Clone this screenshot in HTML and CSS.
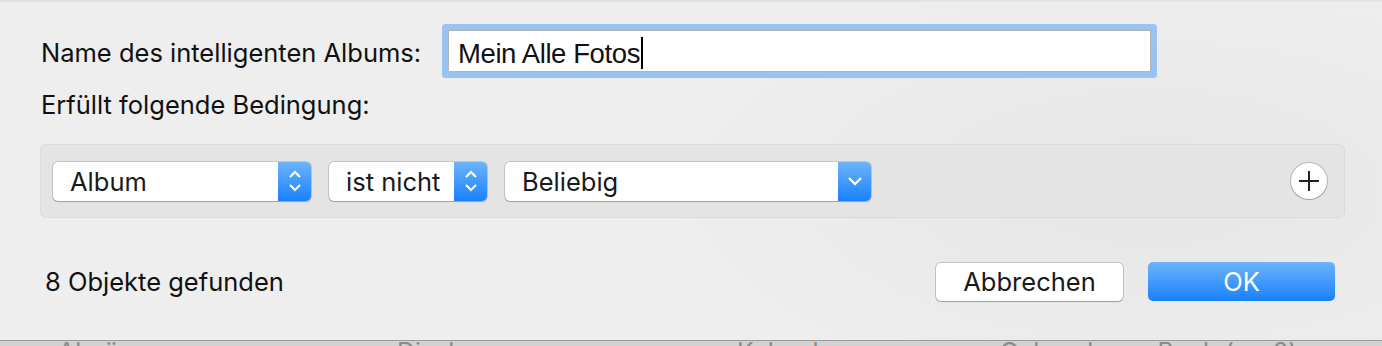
FILE: index.html
```html
<!DOCTYPE html>
<html lang="de">
<head>
    <meta charset="UTF-8">
    <title>Intelligentes Album</title>
    <link rel="stylesheet" href="styles.css">
</head>
<body>
    <div class="sheet">
        <div class="name-row">
            <label class="label" for="album-name">Name des intelligenten Albums:</label>
            <div class="field">
                <span class="field-text">Mein Alle Fotos</span><span class="caret"></span>
            </div>
        </div>

        <div class="label cond-label">Erfüllt folgende Bedingung:</div>

        <div class="criteria">
            <div class="popup popup-album">
                <span class="popup-text">Album</span>
                <span class="popup-arrow">
                    <svg width="14" height="26" viewBox="0 0 14 26"><path d="M2 9 L7 4 L12 9 M2 17 L7 22 L12 17" fill="none" stroke="#fff" stroke-width="2"/></svg>
                </span>
            </div>
            <div class="popup popup-op">
                <span class="popup-text">ist nicht</span>
                <span class="popup-arrow">
                    <svg width="14" height="26" viewBox="0 0 14 26"><path d="M2 9 L7 4 L12 9 M2 17 L7 22 L12 17" fill="none" stroke="#fff" stroke-width="2"/></svg>
                </span>
            </div>
            <div class="popup popup-value">
                <span class="popup-text">Beliebig</span>
                <span class="popup-arrow">
                    <svg width="16" height="12" viewBox="0 0 16 12"><path d="M2 3 L8 9 L14 3" fill="none" stroke="#fff" stroke-width="2.4"/></svg>
                </span>
            </div>
            <div class="add-btn">
                <svg width="22" height="22" viewBox="0 0 22 22"><path d="M11 1 V21 M1 11 H21" stroke="#222" stroke-width="2"/></svg>
            </div>
        </div>

        <div class="footer">
            <div class="count">8 Objekte gefunden</div>
            <button class="btn btn-cancel">Abbrechen</button>
            <button class="btn btn-ok">OK</button>
        </div>
    </div>

    <div class="under">
        <span class="under-item u1">Abzüge</span>
        <span class="under-item u2">Diashow</span>
        <span class="under-item u3">Kalender</span>
        <span class="under-item u4">Gebundenes Buch (groß)</span>
    </div>
</body>
</html>
```

FILE: styles.css
```css
html, body {
    margin: 0;
    padding: 0;
}

body {
    width: 1382px;
    height: 346px;
    overflow: hidden;
    background: #cfcfcf;
    font-family: "Inter", "Liberation Sans", sans-serif;
    color: #111;
}

.sheet {
    height: 341px;
    border-top: 2px solid #e3e3e3;
    background: radial-gradient(ellipse 500px 220px at 1150px 190px, #e6e6e6, rgba(230,230,230,0)), #eeeeee;
    border-bottom: 1px solid #9a9a9a;
    box-shadow: 0 2px 4px rgba(0,0,0,0.25);
    position: relative;
    box-sizing: border-box;
}

.label {
    font-size: 25.5px;
    line-height: 30px;
}

.name-row {
    display: flex;
    align-items: center;
    padding-top: 28px;
    padding-left: 41px;
}

.name-row .label {
    width: 407px;
    margin-top: 3px;
}

.field {
    width: 692px;
    height: 40px;
    background: #fff;
    border: 1px solid #b3b3b3;
    box-shadow: 0 0 0 6px #98c3f2;
    border-radius: 1px;
    display: flex;
    align-items: center;
    padding-left: 9px;
    box-sizing: content-box;
}

.field-text {
    font-family: "Liberation Sans", sans-serif;
    font-size: 27.5px;
    letter-spacing: -0.4px;
    margin-top: 5px;
}

.caret {
    display: inline-block;
    width: 2px;
    height: 32px;
    background: #000;
    margin-left: 1px;
    margin-top: 3px;
}

.cond-label {
    padding-left: 41px;
    margin-top: 18px;
}

.criteria {
    margin: 24px 0 0 40px;
    width: 1305px;
    height: 74px;
    box-sizing: border-box;
    background: #e4e4e4;
    border: 1px solid #dadada;
    border-radius: 6px;
    display: flex;
    align-items: center;
    padding: 0 12px;
}

.popup {
    height: 39px;
    box-sizing: border-box;
    background: #fff;
    border-radius: 5px;
    box-shadow: 0 0 0 1px rgba(0,0,0,0.14), 0 1px 1px rgba(0,0,0,0.18);
    display: flex;
    align-items: center;
    margin-right: 18px;
}

.popup-text {
    flex: 1;
    font-size: 25.5px;
    padding-left: 17px;
    color: #1a1a1a;
}

.popup-arrow {
    width: 33px;
    height: 39px;
    border-radius: 0 5px 5px 0;
    background: linear-gradient(#6db4fb, #1a80fa);
    display: flex;
    align-items: center;
    justify-content: center;
}

.popup-album { width: 258px; }
.popup-op { width: 158px; }
.popup-value { width: 366px; }

.add-btn {
    margin-left: auto;
    margin-right: 5px;
    width: 36px;
    height: 36px;
    border-radius: 50%;
    background: #fff;
    box-shadow: 0 0 0 1px rgba(0,0,0,0.2), 0 1px 1px rgba(0,0,0,0.15);
    display: flex;
    align-items: center;
    justify-content: center;
}

.footer {
    display: flex;
    align-items: center;
    margin-top: 44px;
    padding-left: 45px;
}

.count {
    font-size: 25.5px;
    flex: 1;
}

.btn {
    font-family: "Inter", "Liberation Sans", sans-serif;
    font-size: 25.5px;
    height: 38px;
    width: 187px;
    border-radius: 5px;
    padding: 0;
}

.btn-cancel {
    background: #fff;
    border: none;
    box-shadow: 0 0 0 1px rgba(0,0,0,0.16), 0 1px 1px rgba(0,0,0,0.2);
    color: #1a1a1a;
    margin-right: 25px;
}

.btn-ok {
    background: linear-gradient(#6db4fb, #1a80fa);
    border: none;
    color: #fff;
    margin-right: 47px;
    height: 39px;
}

.under {
    height: 5px;
    overflow: hidden;
    position: relative;
    background: #d2d2d2;
}

.under-item {
    position: absolute;
    top: -1px;
    font-size: 25px;
    line-height: 25px;
    color: #8a8a8a;
}

.u1 { left: 58px; }
.u2 { left: 397px; }
.u3 { left: 737px; }
.u4 { left: 1000px; }
```
